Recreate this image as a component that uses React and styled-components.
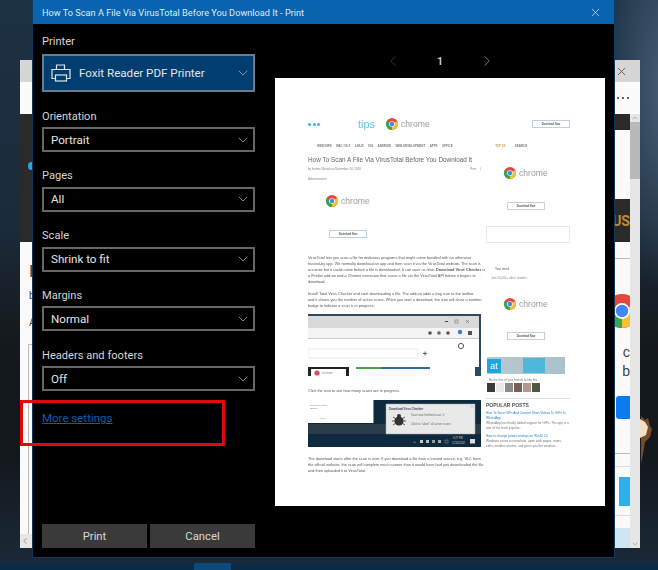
import React from 'react';
import styled, {createGlobalStyle} from 'styled-components';
import {ChevronDown, ChevronLeft, ChevronRight, ChevronUp, X} from 'lucide-react';

const GlobalStyle = createGlobalStyle`
  html, body {
    margin: 0;
    padding: 0;
    background: #0b2438;
  }
  * {
    box-sizing: border-box;
  }
`;

const Desktop = styled.div`
  position: relative;
  width: 658px;
  height: 570px;
  overflow: hidden;
  font-family: Roboto, "Liberation Sans", sans-serif;
  background:
    radial-gradient(ellipse 70px 200px at 670px 90px, #4a6179 0%, rgba(74, 97, 121, 0) 100%),
    linear-gradient(180deg, #1d3145 0%, #1b2b3a 40%, #15191d 60%, #13181d 80%, #1b2b39 100%);
`;

const Taskbar = styled.div`
  position: absolute;
  left: 0;
  right: 0;
  bottom: 0;
  height: 7px;
  display: flex;
  padding-left: 194px;
  background: #0b2b45;
`;

const TaskbarItem = styled.div`
  width: 37px;
  background: #0c4a7c;
`;

const Flame = styled.svg`
  position: absolute;
  left: 640px;
  top: 416px;
`;

/* browser window behind the print dialog */
const Browser = styled.div`
  position: absolute;
  left: 20px;
  top: 60px;
  width: 620px;
  height: 488px;
  display: flex;
  flex-direction: column;
  background: #fff;
`;

const TabBar = styled.div`
  height: 24px;
  display: flex;
  justify-content: flex-end;
  align-items: center;
  padding-right: 12px;
  background: #d6d6d6;
  color: #444;
`;

const ToolBar = styled.div`
  height: 34px;
  display: flex;
  justify-content: flex-end;
  align-items: center;
  gap: 3px;
  padding: 0 11px 0 0;
  background: #fbfbfb;
`;

const Dot = styled.span`
  width: 2px;
  height: 2px;
  border-radius: 50%;
  background: #333;
`;

const PageRow = styled.div`
  flex: 1;
  display: flex;
  justify-content: space-between;
`;

const LeftStrip = styled.div`
  width: 60px;
  display: flex;
  flex-direction: column;
`;

const DarkBand = styled.div`
  height: ${(p) => p.$h}px;
  flex: none;
  display: flex;
  justify-content: ${(p) => p.$end ? 'flex-end' : 'flex-start'};
  align-items: center;
  padding: ${(p) => p.$pad || '0'};
  background: #2a2a2a;
  color: #c58a35;
  font-size: 14px;
  font-weight: 700;
`;

const EdgeDot = styled.span`
  width: 6px;
  height: 8px;
  border-radius: 50%;
  background: #2aa5df;
`;

const LightBand = styled.div`
  flex: 1;
  display: flex;
  flex-direction: column;
  padding: 18px 0 0 9px;
  background: #fafafa;
`;

const SideLetter = styled.span`
  font-size: ${(p) => p.$size}px;
  line-height: ${(p) => p.$line}px;
  color: #444;
`;

const InnerFrame = styled.div`
  flex: 1;
  margin: 8px 0 0 -1px;
  border-left: 1px solid #bbb;
  border-top: 1px solid #bbb;
`;

const LeftScroll = styled.div`
  height: 14px;
  display: flex;
  align-items: center;
  background: #e6e6e6;
  color: #888;
`;

const RightStrip = styled.div`
  width: 45px;
  display: flex;
`;

const RightColumn = styled.div`
  width: 35px;
  display: flex;
  flex-direction: column;
  background: #fafafa;
  overflow: hidden;
`;

const RightFill = styled.div`
  height: ${(p) => p.$h}px;
  flex: none;
  margin-top: ${(p) => p.$mt || 0}px;
  background: ${(p) => p.$bg || 'transparent'};
  border-bottom: ${(p) => p.$line ? '1px solid #bbb' : 'none'};
`;

const CutLogo = styled.div`
  height: 34px;
  margin-top: 35px;
  padding-left: 10px;
  flex: none;
`;

const CutText = styled.div`
  height: ${(p) => p.$h}px;
  flex: none;
  margin-top: ${(p) => p.$mt}px;
  text-align: right;
  font-size: 14px;
  line-height: ${(p) => p.$h}px;
  color: #444;
`;

const BlueTile = styled.div`
  height: 23px;
  flex: none;
  margin: 16px 0 0 21px;
  border-radius: 3px 0 0 3px;
  background: #0a7cf0;
`;

const TwitterTile = styled.div`
  height: 29px;
  flex: none;
  margin: 10px 0 0 24px;
  background: #2cb1ee;
`;

const Scrollbar = styled.div`
  width: 10px;
  display: flex;
  flex-direction: column;
  align-items: center;
  background: #e6e6e6;
  color: #999;
`;

const ScrollThumb = styled.div`
  width: 10px;
  height: 57px;
  background: #b9b9b9;
`;

const ScrollSpacer = styled.div`
  flex: 1;
`;

/* print dialog */
const Dialog = styled.div`
  position: absolute;
  left: 32px;
  top: 0;
  width: 583px;
  height: 558px;
  display: flex;
  flex-direction: column;
  background: #000;
  border: 1px solid #0d3a5e;
  border-top: none;
  filter: blur(0.3px);
`;

const TitleBar = styled.div`
  height: 24px;
  flex: none;
  display: flex;
  justify-content: space-between;
  align-items: center;
  padding: 0 12px 0 9px;
  background: #0a63ae;
  color: #dcebf7;
  font-size: 9.2px;
`;

const DialogBody = styled.div`
  flex: 1;
  display: flex;
`;

const SidePane = styled.div`
  width: 213px;
  margin-left: 9px;
  padding-top: 11px;
  display: flex;
  flex-direction: column;
`;

const Field = styled.div`
  display: flex;
  flex-direction: column;
  margin-bottom: ${(p) => p.$tall ? 17.5 : 17.25}px;
`;

const FieldLabel = styled.div`
  height: 14px;
  margin-bottom: ${(p) => p.$tall ? 5 : 3.5}px;
  color: #d5d5d5;
  font-size: 11.1px;
  line-height: 14px;
`;

const Select = styled.div`
  height: ${(p) => p.$tall ? 38 : 25}px;
  display: flex;
  align-items: center;
  padding: 0 2px 0 7px;
  border: 2px solid ${(p) => p.$tall ? '#6e7c88' : '#666'};
  background: ${(p) => p.$tall ? '#003e72' : '#000'};
  color: #e4e4e4;
  font-size: 11.6px;
`;

const SelectValue = styled.span`
  flex: 1;
  margin-left: ${(p) => p.$icon ? 8 : 0}px;
`;

const MoreLink = styled.a`
  margin-top: 1.75px;
  color: #0a5ea6;
  font-size: 11.5px;
  line-height: 16px;
  text-decoration: underline;
`;

const Buttons = styled.div`
  margin-top: auto;
  margin-bottom: 9px;
  display: grid;
  grid-template-columns: 105px 105px;
  gap: 3px;
`;

const Button = styled.div`
  height: 24px;
  display: flex;
  align-items: center;
  justify-content: center;
  background: #3a3a3a;
  color: #d8d8d8;
  font-size: 11.3px;
`;

const PreviewPane = styled.div`
  margin-left: 20px;
  width: 330px;
  display: flex;
  flex-direction: column;
`;

const Pager = styled.div`
  height: 54px;
  padding: 28px 0 8px;
  display: flex;
  align-items: center;
  justify-content: center;
  gap: 35px;
  color: #d5d5d5;
  font-size: 11.5px;
  font-weight: 500;
`;

const PagerArrow = styled.span`
  display: flex;
  color: ${(p) => p.$dim ? '#3d3d3d' : '#8c8c8c'};
`;

/* the previewed page, tiny and soft */
const Paper = styled.div`
  height: 428px;
  padding: 39px 35px 0 33px;
  background: #fff;
  color: #555;
  font-family: "Liberation Sans", sans-serif;
  overflow: hidden;
`;

const PaperInner = styled.div`
  filter: blur(0.35px);
`;

const PaperHeader = styled.div`
  height: 14px;
  display: flex;
  align-items: center;
`;

const BlueDots = styled.div`
  width: 50px;
  display: flex;
  gap: 1.5px;
`;

const BlueDot = styled.span`
  width: 3px;
  height: 3px;
  border-radius: 50%;
  background: #35b5e8;
`;

const Tips = styled.span`
  width: 28px;
  color: #6cc4e8;
  font-size: 11px;
`;

const Logo = styled.div`
  display: flex;
  align-items: center;
  gap: 3px;
  height: 12px;
  margin: ${(p) => p.$m || '0'};
  color: #9a9a9a;
  font-size: 8.6px;
`;

const DownloadBtn = styled.div`
  width: 38px;
  height: 8px;
  display: flex;
  align-items: center;
  justify-content: center;
  margin: ${(p) => p.$m || '0'};
  border: 1px solid #bcd0e6;
  color: #555;
  font-size: 2.6px;
  font-weight: 700;
`;

const Nav = styled.div`
  height: 6px;
  margin-top: 12px;
  padding-left: 9px;
  display: flex;
  gap: 4.5px;
  color: #777;
  font-size: 2.9px;
  font-weight: 700;
  line-height: 6px;
`;

const NavAccent = styled.span`
  margin-left: ${(p) => p.$gap}px;
  color: ${(p) => p.$color};
`;

const PaperColumns = styled.div`
  margin-top: 6px;
  display: grid;
  grid-template-columns: 173px 84px;
  gap: 5px;
`;

const MainCol = styled.div`
  display: flex;
  flex-direction: column;
`;

const SideCol = styled.div`
  display: flex;
  flex-direction: column;
`;

const ArticleTitle = styled.div`
  height: 10px;
  color: #666;
  font-size: 6.4px;
  line-height: 10px;
  white-space: nowrap;
`;

const Meta = styled.div`
  height: 6px;
  margin-top: ${(p) => p.$mt || 1}px;
  display: flex;
  justify-content: space-between;
  color: #888;
  font-size: 2.9px;
  line-height: 6px;
`;

const Para = styled.p`
  margin: ${(p) => p.$mt}px 0 0;
  color: #555;
  font-size: 3.85px;
  line-height: 6px;
  white-space: nowrap;
`;

const Shot = styled.svg`
  display: block;
  margin-top: ${(p) => p.$mt}px;
`;

const SmallLine = styled.div`
  height: 6px;
  margin: ${(p) => p.$m};
  color: ${(p) => p.$color || '#777'};
  font-size: 3px;
  line-height: 6px;
  white-space: nowrap;
`;

const EmptyBox = styled.div`
  height: 17px;
  margin-top: 16px;
  border: 1px solid #e8e8e8;
`;

const AtCard = styled.div`
  width: 78px;
  margin: 17px 0 0 1px;
  display: flex;
  flex-direction: column;
`;

const AtBanner = styled.div`
  height: 17px;
  display: flex;
  align-items: center;
  justify-content: space-between;
  padding-right: 20px;
  background: linear-gradient(90deg, #b9c8cf, #a9c2cc);
`;

const AtMark = styled.div`
  width: 14px;
  height: 14px;
  display: flex;
  align-items: center;
  justify-content: center;
  background: #1ca7df;
  color: #fff;
  font-size: 9px;
`;

const AtTag = styled.div`
  width: 22px;
  height: 15px;
  background: #4fb6dc;
`;

const Faces = styled.div`
  display: flex;
  gap: 1px;
  margin-top: 0;
`;

const Face = styled.span`
  width: 8px;
  height: 9px;
  background: ${(p) => p.$c};
`;

const SideRule = styled.div`
  height: 1px;
  margin-top: 6px;
  background: #ddd;
`;

const PopularTitle = styled.div`
  height: 9px;
  margin-top: 2px;
  color: #555;
  font-size: 5px;
  font-weight: 700;
  line-height: 9px;
  white-space: nowrap;
`;

const PostLink = styled.div`
  margin-top: ${(p) => p.$mt}px;
  color: #2d7fc4;
  font-size: 3.2px;
  line-height: 5px;
`;

const PostText = styled.div`
  color: #777;
  font-size: 3.2px;
  line-height: 5px;
`;

/* annotation over the screenshot */
const RedBox = styled.div`
  position: absolute;
  left: 20px;
  top: 400px;
  width: 205px;
  height: 46px;
  border: 3px solid #e00a0a;
  filter: blur(0.3px);
`;

const ChromeLogo = ({size = 12}) => (
  <svg width={size} height={size} viewBox="0 0 24 24">
    <circle cx="12" cy="12" r="12" fill="#e8453c" />
    <path d="M12 12 L1.6 6 A12 12 0 0 0 12 24 Z" fill="#34a853" />
    <path d="M12 12 L12 24 A12 12 0 0 0 22.4 6 Z" fill="#fbc02d" />
    <circle cx="12" cy="12" r="5.6" fill="#fff" />
    <circle cx="12" cy="12" r="4.4" fill="#4285f4" />
  </svg>
);

const PrinterIcon = () => (
  <svg width="20" height="18" viewBox="0 0 20 18" fill="none" stroke="#e0e6ec" strokeWidth="1.2">
    <path d="M5.5 5.5V1h8v4.5" />
    <path d="M4.5 14.5H1V5.5h18v9h-3.500" />
    <rect x="4.500" y="11" width="11" height="6" />
  </svg>
);

const ChromeMark = ({m}) => (
  <Logo $m={m}>
    <ChromeLogo />
    <span>chrome</span>
  </Logo>
);

const ArrowIcon = () => <ChevronDown size={16} strokeWidth={1.2} color="#a8a8a8" />;

const fields = [
  {label: 'Orientation', value: 'Portrait'},
  {label: 'Pages', value: 'All'},
  {label: 'Scale', value: 'Shrink to fit'},
  {label: 'Margins', value: 'Normal'},
  {label: 'Headers and footers', value: 'Off'},
];

const faceColors = ['#3a3a3a', '#e9e9e9', '#8f8a84', '#77605a', '#b09a90', '#4e5a44'];

const BrowserShot = () => (
  <Shot $mt={5} width="173" height="62" viewBox="0 0 173 62">
    <rect width="173" height="62" fill="#fff" />
    <rect width="173" height="2" fill="#2c4a63" />
    <rect x="171" width="2" height="62" fill="#2c4a63" />
    <rect y="2" width="171" height="12" fill="#d9d9d9" />
    <rect y="14" width="171" height="10" fill="#f4f4f4" />
    <rect y="24" width="171" height="1" fill="#ccc" />
    <rect x="0" y="35" width="110" height="9" fill="#fff" stroke="#ddd" strokeWidth="0.6" />
    <path d="M115 39.500h4M117 37.500v4" stroke="#555" strokeWidth="0.9" />
    <circle cx="153" cy="32" r="2.600" fill="none" stroke="#555" strokeWidth="1" />
    <circle cx="122" cy="19" r="1.800" fill="#555" />
    <circle cx="131" cy="19" r="1.800" fill="#666" />
    <circle cx="140" cy="19" r="1.800" fill="#555" />
    <circle cx="152" cy="18" r="2.200" fill="#3f7fc1" />
    <rect x="160" y="17" width="4" height="4" fill="#555" />
    <rect x="137" y="7" width="3" height="1" fill="#444" />
    <rect x="147" y="6" width="3" height="3" fill="none" stroke="#777" strokeWidth="0.6" />
    <path d="M158 6l3 3M161 6l-3 3" stroke="#666" strokeWidth="0.6" />
    <rect x="0" y="53" width="41" height="9" fill="#222" />
    <rect x="3" y="55" width="35" height="7" fill="#fff" />
    <circle cx="9" cy="59" r="2.600" fill="#e8453c" />
    <circle cx="9" cy="59" r="1" fill="#4285f4" />
    <text x="14" y="60" fontSize="3.200" fill="#888">chrome</text>
    <rect x="48" y="53" width="74" height="2" fill="#2f6f9e" />
    <rect x="48" y="53" width="25" height="2" fill="#49a24c" />
    <rect x="48" y="55" width="74" height="7" fill="#fafafa" />
    <rect x="167" y="53" width="4" height="9" fill="#2c4a63" />
  </Shot>
);

const NoticeShot = () => (
  <Shot $mt={6} width="173" height="47" viewBox="0 0 173 47">
    <rect width="173" height="47" fill="#0d2a3f" />
    <rect y="24" width="173" height="10" fill="#2b3c48" />
    <rect width="65" height="23" fill="#fff" />
    <rect x="65" width="1" height="23" fill="#888" />
    <text x="2" y="6" fontSize="2.400" fill="#777">Report for Open</text>
    <text x="2" y="9" fontSize="2.400" fill="#777">Source</text>
    <text x="12" y="19" fontSize="2.400" fill="#8a9a5a">Done</text>
    <rect x="78" y="4" width="89" height="30" fill="#e9e9e9" stroke="#aaa" strokeWidth="0.5" />
    <text x="81" y="10" fontSize="2.900" fontWeight="700" fill="#444">Download Virus Checker</text>
    <text x="103" y="16" fontSize="2.900" fill="#666">Scan was finished scan: 1</text>
    <text x="103" y="24.500" fontSize="2.900" fill="#666">Click to "abort" all active scans</text>
    <path d="M165 7.500l-2-2M163 7.500l2-2" stroke="#888" strokeWidth="0.4" />
    <circle cx="91" cy="21" r="4.500" fill="#333" />
    <circle cx="91" cy="16" r="2" fill="#333" />
    <path d="M85 17l12 8M97 17l-12 8M84 21h14" stroke="#333" strokeWidth="0.8" />
    <path d="M105 43l1.500-1.500 1.500 1.500" stroke="#ddd" strokeWidth="0.4" fill="none" />
    <rect x="112" y="40" width="3" height="3" fill="#ccc" />
    <rect x="118" y="40" width="3" height="3" fill="#bbb" />
    <rect x="124" y="40" width="3" height="3" fill="#999" />
    <rect x="130" y="40" width="3" height="3" fill="#aaa" />
    <rect x="137" y="40" width="3" height="3" fill="none" stroke="#bbb" strokeWidth="0.4" />
    <text x="145" y="39" fontSize="2.600" fill="#ccc">9:27 PM</text>
    <text x="144" y="44" fontSize="2.600" fill="#ccc">11/14/2018</text>
    <rect x="162" y="39" width="5" height="4.500" fill="#ddd" />
  </Shot>
);

const PrintedPage = () => (
  <Paper>
    <PaperInner>
      <PaperHeader>
        <BlueDots>
          <BlueDot />
          <BlueDot />
          <BlueDot />
        </BlueDots>
        <Tips>tips</Tips>
        <ChromeMark />
        <DownloadBtn $m="0 0 0 auto">Download Now</DownloadBtn>
      </PaperHeader>
      <Nav>
        <span>WINDOWS</span>
        <span>MAC OS X</span>
        <span>LINUX</span>
        <span>IOS</span>
        <span>ANDROID</span>
        <span>WEB DEVELOPMENT</span>
        <span>APPS</span>
        <span>OFFICE</span>
        <NavAccent $gap={38} $color="#c79a57">TOP 5S</NavAccent>
        <NavAccent $gap={5} $color="#777">SEARCH</NavAccent>
      </Nav>
      <PaperColumns>
        <MainCol>
          <ArticleTitle>How To Scan A File Via VirusTotal Before You Download It</ArticleTitle>
          <Meta>
            <span>by Fatima Wahab on November 14, 2018</span>
            <span>Print &nbsp;&nbsp;&nbsp;&nbsp;|</span>
          </Meta>
          <Meta $mt={4}>Advertisement</Meta>
          <ChromeMark m="13px 0 0 18px" />
          <DownloadBtn $m="23px 0 0 21px">Download Now</DownloadBtn>
          <Para $mt={17}>
            VirusTotal lets you scan a file for malicious programs that might come bundled with an otherwise<br />
            trusted-by app. We normally download an app and then scan it via the VirusTotal website. The scan is<br />
            accurate but it could come before a file is downloaded. It can save us time. <b>Download Virus Checker</b> is<br />
            a Firefox add-on and a Chrome extension that scans a file via the VirusTotal API before it begins to<br />
            download.
          </Para>
          <Para $mt={6}>
            Install Total Virus Checker and start downloading a file. The add-on adds a bug icon to the toolbar<br />
            and it shows you the number of active scans. When you start a download, the icon will show a number<br />
            badge to indicate a scan is in progress.
          </Para>
          <BrowserShot />
          <Para $mt={12}>Click the icon to see how many scans are in progress.</Para>
          <NoticeShot />
          <Para $mt={9}>
            The download starts after the scan is over. If you download a file from a trusted source, e.g. VLC from<br />
            the official website, the scan will complete much sooner than it would have had you downloaded the file<br />
            and then uploaded it to VirusTotal.
          </Para>
        </MainCol>
        <SideCol>
          <ChromeMark m="12px 0 0 18px" />
          <DownloadBtn $m="23px 0 0 21px">Download Now</DownloadBtn>
          <EmptyBox />
          <SmallLine $m="23px 0 0 9px" $color="#555">Your email</SmallLine>
          <SmallLine $m="3px 0 0 5px" $color="#a08a6a">Join 50,000+ other readers</SmallLine>
          <ChromeMark m="17px 0 0 18px" />
          <DownloadBtn $m="22px 0 0 21px">Download Now</DownloadBtn>
          <AtCard>
            <AtBanner>
              <AtMark>at</AtMark>
              <AtTag />
            </AtBanner>
            <SmallLine $m="3px 0 0 2px">Be the first of your friends to like this</SmallLine>
            <Faces>
              {faceColors.map((c) => <Face key={c} $c={c} />)}
            </Faces>
          </AtCard>
          <SideRule />
          <PopularTitle>POPULAR POSTS</PopularTitle>
          <PostLink $mt={1}>How To Save GIFs And Convert Short Videos To GIFs In WhatsApp</PostLink>
          <PostText>WhatsApp has finally added support for GIFs. The app is a one of the most popular...</PostText>
          <PostLink $mt={3}>How to change power settings on Win10 10</PostLink>
          <PostText>Windows saves screenshots, open web pages, notes, edits, enables alarms, and gives you the weather...</PostText>
        </SideCol>
      </PaperColumns>
    </PaperInner>
  </Paper>
);

const BackgroundBrowser = () => (
  <Browser>
    <TabBar>
      <X size={13} strokeWidth={1.4} />
    </TabBar>
    <ToolBar>
      <Dot />
      <Dot />
      <Dot />
    </ToolBar>
    <PageRow>
      <LeftStrip>
        <DarkBand $h={128} $pad="0 0 24px 8px"><EdgeDot /></DarkBand>
        <LightBand>
          <SideLetter $size={17} $line={22}>H</SideLetter>
          <SideLetter $size={10} $line={27}>b</SideLetter>
          <SideLetter $size={10} $line={27}>A</SideLetter>
          <InnerFrame />
        </LightBand>
        <LeftScroll>
          <ChevronLeft size={10} />
        </LeftScroll>
      </LeftStrip>
      <RightStrip>
        <RightColumn>
          <DarkBand $h={16} />
          <RightFill $h={69} />
          <DarkBand $h={43} $end>US</DarkBand>
          <RightFill $h={17} $line />
          <CutLogo>
            <ChromeLogo size={34} />
          </CutLogo>
          <CutText $h={16} $mt={16}>c</CutText>
          <CutText $h={18} $mt={2}>b</CutText>
          <BlueTile />
          <RightFill $h={1} $mt={34} $bg="#bbb" />
          <RightFill $h={1} $mt={12} $bg="#ddd" />
          <TwitterTile />
          <RightFill $h={1} $mt={9} $bg="#ddd" />
          <RightFill $h={20} $mt={12} $bg="#cfe6f2" />
        </RightColumn>
        <Scrollbar>
          <ChevronUp size={8} />
          <ScrollThumb />
          <ScrollSpacer />
          <ChevronDown size={8} />
        </Scrollbar>
      </RightStrip>
    </PageRow>
  </Browser>
);

const App = () => (
  <Desktop>
    <GlobalStyle />
    <Flame width="13" height="54" viewBox="0 0 13 54">
      <path d="M1 0l4 4 3-2 2 8 2 3-2 8-5 5-2 12-2 10z" fill="#7a4a28" />
      <path d="M0 3l5 3 3 5-2 8-6 3z" fill="#efe2c4" />
    </Flame>
    <Taskbar>
      <TaskbarItem />
    </Taskbar>
    <BackgroundBrowser />
    <Dialog>
      <TitleBar>
        <span>How To Scan A File Via VirusTotal Before You Download It - Print</span>
        <X size={13} strokeWidth={1.3} />
      </TitleBar>
      <DialogBody>
        <SidePane>
          <Field $tall>
            <FieldLabel $tall>Printer</FieldLabel>
            <Select $tall>
              <PrinterIcon />
              <SelectValue $icon>Foxit Reader PDF Printer</SelectValue>
              <ArrowIcon />
            </Select>
          </Field>
          {fields.map((f) => (
            <Field key={f.label}>
              <FieldLabel>{f.label}</FieldLabel>
              <Select>
                <SelectValue>{f.value}</SelectValue>
                <ArrowIcon />
              </Select>
            </Field>
          ))}
          <MoreLink>More settings</MoreLink>
          <Buttons>
            <Button>Print</Button>
            <Button>Cancel</Button>
          </Buttons>
        </SidePane>
        <PreviewPane>
          <Pager>
            <PagerArrow $dim><ChevronLeft size={18} strokeWidth={1.1} /></PagerArrow>
            <span>1</span>
            <PagerArrow><ChevronRight size={18} strokeWidth={1.1} /></PagerArrow>
          </Pager>
          <PrintedPage />
        </PreviewPane>
      </DialogBody>
    </Dialog>
    <RedBox />
  </Desktop>
);

export default App;
